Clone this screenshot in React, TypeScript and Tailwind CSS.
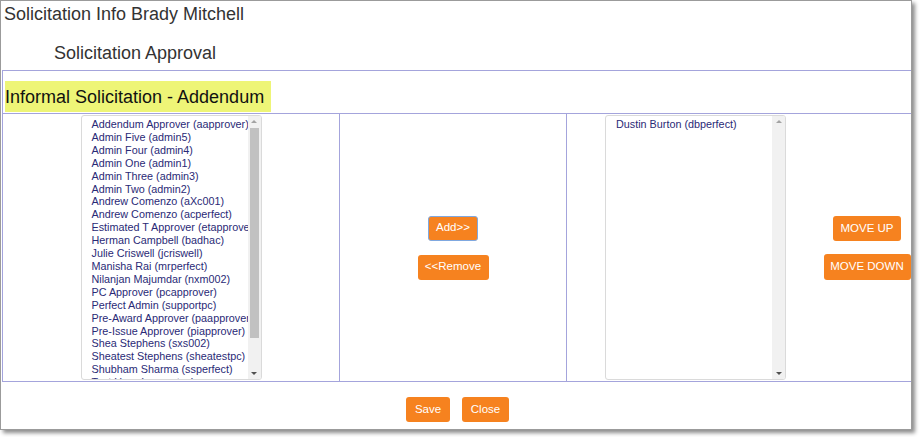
const approvers = [
  "Addendum Approver (aapprover)",
  "Admin Five (admin5)",
  "Admin Four (admin4)",
  "Admin One (admin1)",
  "Admin Three (admin3)",
  "Admin Two (admin2)",
  "Andrew Comenzo (aXc001)",
  "Andrew Comenzo (acperfect)",
  "Estimated T Approver (etapprover)",
  "Herman Campbell (badhac)",
  "Julie Criswell (jcriswell)",
  "Manisha Rai (mrperfect)",
  "Nilanjan Majumdar (nxm002)",
  "PC Approver (pcapprover)",
  "Perfect Admin (supportpc)",
  "Pre-Award Approver (paapprover)",
  "Pre-Issue Approver (piapprover)",
  "Shea Stephens (sxs002)",
  "Sheatest Stephens (sheatestpc)",
  "Shubham Sharma (ssperfect)",
  "Test User (supportpc)",
]

const selected = ["Dustin Burton (dbperfect)"]

const OrangeButton = ({ label, className = "" }: { label: string; className?: string }) => (
  <button
    className={`h-[25px] rounded-[3px] bg-[#f6821f] text-white text-[11.5px] flex items-center justify-center ${className}`}
  >
    {label}
  </button>
)

const ListBox = ({ items, thumb }: { items: string[]; thumb: boolean }) => (
  <div className="w-[181px] h-[265px] border border-[#dadada] rounded-[3px] bg-white flex overflow-hidden">
    <div className="flex-1 min-w-0 pt-[2px] pl-[10px] overflow-hidden">
      {items.map((item) => (
        <div key={item} className="text-[10.8px] leading-[12.9px] text-[#2a2a76] whitespace-nowrap">
          {item}
        </div>
      ))}
    </div>
    {/* scrollbar */}
    <div className="w-[13px] bg-[#f1f1f1] flex flex-col items-center">
      <div className="h-[11px] flex items-center justify-center">
        <div className="w-0 h-0 border-l-[3px] border-r-[3px] border-b-[3px] border-l-transparent border-r-transparent border-b-[#a3a3a3]" />
      </div>
      <div className="flex-1 w-full px-[2px]">
        {thumb && <div className="h-[210px] mt-[1px] bg-[#c1c1c1]" />}
      </div>
      <div className="h-[11px] flex items-center justify-center">
        <div className="w-0 h-0 border-l-[3px] border-r-[3px] border-t-[3px] border-l-transparent border-r-transparent border-t-[#505050]" />
      </div>
    </div>
  </div>
)

export default function App() {
  return (
    <div className="w-[920px] h-[437px] bg-white font-['Liberation_Sans',Arial,sans-serif]">
      <div className="w-[912px] h-[430px] border border-[#9b9b9b] shadow-[3px_3px_4px_rgba(0,0,0,0.45)] flex flex-col bg-white">
        {/* Titles */}
        <div className="h-[27px] pt-[1px] pl-[3px] text-[18px] leading-[24px] text-[#333]">
          Solicitation Info Brady Mitchell
        </div>
        <div className="h-[42px] pt-[13px] pl-[53px] text-[18px] leading-[24px] text-[#333]">
          Solicitation Approval
        </div>

        {/* Section */}
        <div className="ml-[1px] border-l border-t border-b border-[#a4a4dc] flex flex-col">
          <div className="h-[43px] pt-[10px] pl-[2px] border-b border-[#a4a4dc]">
            <span className="inline-block h-[31px] pr-[7px] bg-[#eef577] text-[18px] leading-[32px] text-[#111]">
              Informal Solicitation - Addendum
            </span>
          </div>

          <div className="h-[267px] flex">
            <div className="w-[337px] border-r border-[#a4a4dc] flex items-center justify-center">
              <ListBox items={approvers} thumb />
            </div>
            <div className="w-[227px] border-r border-[#a4a4dc] flex flex-col items-center justify-center gap-[14px]">
              <OrangeButton label="Add>>" className="w-[50px] border border-[#7fa8e0]" />
              <OrangeButton label="<<Remove" className="w-[71px]" />
            </div>
            <div className="flex-1 flex items-center pl-[38px]">
              <ListBox items={selected} thumb={false} />
              <div className="ml-[37px] w-[88px] flex flex-col items-center gap-[13px] pt-[1px]">
                <OrangeButton label="MOVE UP" className="w-[68px]" />
                <OrangeButton label="MOVE DOWN" className="w-[87px] h-[26px]" />
              </div>
            </div>
          </div>
        </div>

        {/* Footer */}
        <div className="flex-1 pt-[15px] flex justify-center gap-[12px] pl-[3px]">
          <OrangeButton label="Save" className="w-[44px]" />
          <OrangeButton label="Close" className="w-[47px]" />
        </div>
      </div>
    </div>
  )
}
